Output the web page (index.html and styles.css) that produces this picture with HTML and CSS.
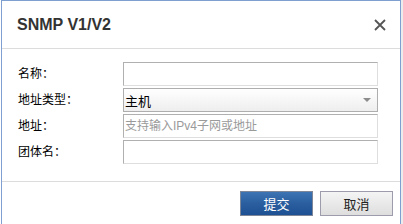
FILE: index.html
```html
<!DOCTYPE html>
<html lang="zh-CN">
<head>
  <meta charset="UTF-8" />
  <title>SNMP V1/V2</title>
  <link rel="stylesheet" href="styles.css">
</head>
<body>

  <div class="dialog">
    <header class="dialog-header">
      <h1 class="title">SNMP V1/V2</h1>
      <button class="close" title="关闭">
        <svg width="12" height="12" viewBox="0 0 12 12">
          <path d="M1 1 L11 11 M11 1 L1 11" stroke="#555" stroke-width="1.8" fill="none" />
        </svg>
      </button>
    </header>

    <div class="dialog-body">
      <div class="row">
        <label for="name-input">名称：</label>
        <input type="text" id="name-input" />
      </div>
      <div class="row">
        <label for="type-select">地址类型：</label>
        <div class="select" id="type-select">
          <span>主机</span>
          <i class="arrow"></i>
        </div>
      </div>
      <div class="row">
        <label for="addr-input">地址：</label>
        <input type="text" id="addr-input" placeholder="支持输入IPv4子网或地址" />
      </div>
      <div class="row">
        <label for="community-input">团体名：</label>
        <input type="text" id="community-input" />
      </div>
    </div>

    <footer class="dialog-footer">
      <button class="btn btn-primary">提交</button>
      <button class="btn">取消</button>
    </footer>
  </div>

</body>
</html>
```

FILE: styles.css
```css
body, html {
  margin: 0;
  padding: 0;
  background: white;
  font-family: "Liberation Sans", "Noto Sans CJK SC", sans-serif;
  font-size: 12px;
  color: #000;
  overflow: hidden;
}

.dialog {
  box-sizing: border-box;
  margin-left: 1px;
  width: 400px;
  height: 224px;
  border: 1px solid #7f9fd0;
  border-bottom: none;
  background: white;
  box-shadow: 2px 0 0 #ececec;
}

.dialog-header {
  height: 47px;
  display: flex;
  align-items: center;
  justify-content: space-between;
  padding: 0 14px 0 15px;
  border-bottom: 1px solid #dcdcdc;
}

.title {
  margin: 0;
  font-size: 16px;
  font-weight: bold;
  color: #333;
  padding-top: 1px;
}

.close {
  border: none;
  background: none;
  padding: 0;
  width: 12px;
  height: 12px;
  display: flex;
  cursor: pointer;
}

.dialog-body {
  padding: 12px 0 16px 16px;
  border-bottom: 1px solid #dcdcdc;
}

.row {
  display: flex;
  align-items: center;
  height: 26px;
}

.row label {
  width: 105px;
  margin-top: -4px;
  font-size: 12px;
}

.row input {
  box-sizing: border-box;
  width: 255px;
  height: 24px;
  margin: 0;
  padding: 0 0 0 1px;
  border: 1px solid;
  border-color: #b0b0b0 #dedede #dedede #b0b0b0;
  font-family: inherit;
  font-size: 12px;
  outline: none;
}

.row input::placeholder {
  color: #9a9a9a;
}

.select {
  box-sizing: border-box;
  width: 255px;
  height: 24px;
  display: flex;
  align-items: center;
  justify-content: space-between;
  padding: 0 6px 0 1px;
  border: 1px solid #aeaeae;
  background: linear-gradient(#ffffff, #eeeeee);
  font-size: 13px;
}

.arrow {
  width: 0;
  height: 0;
  border-left: 4px solid transparent;
  border-right: 4px solid transparent;
  border-top: 4px solid #8c8c8c;
}

.dialog-footer {
  display: flex;
  justify-content: flex-end;
  gap: 7px;
  padding: 9px 7px 0 0;
}

.btn {
  width: 73px;
  height: 25px;
  border: 1px solid #9c9cac;
  background: linear-gradient(#f4f4f4, #e9e9e9 50%, #dedede);
  color: #222;
  font-family: inherit;
  font-size: 13px;
  cursor: pointer;
}

.btn-primary {
  border-color: #7d8797;
  background: linear-gradient(#3d74b4, #2a5e9f 50%, #1e5193);
  color: white;
}
```
